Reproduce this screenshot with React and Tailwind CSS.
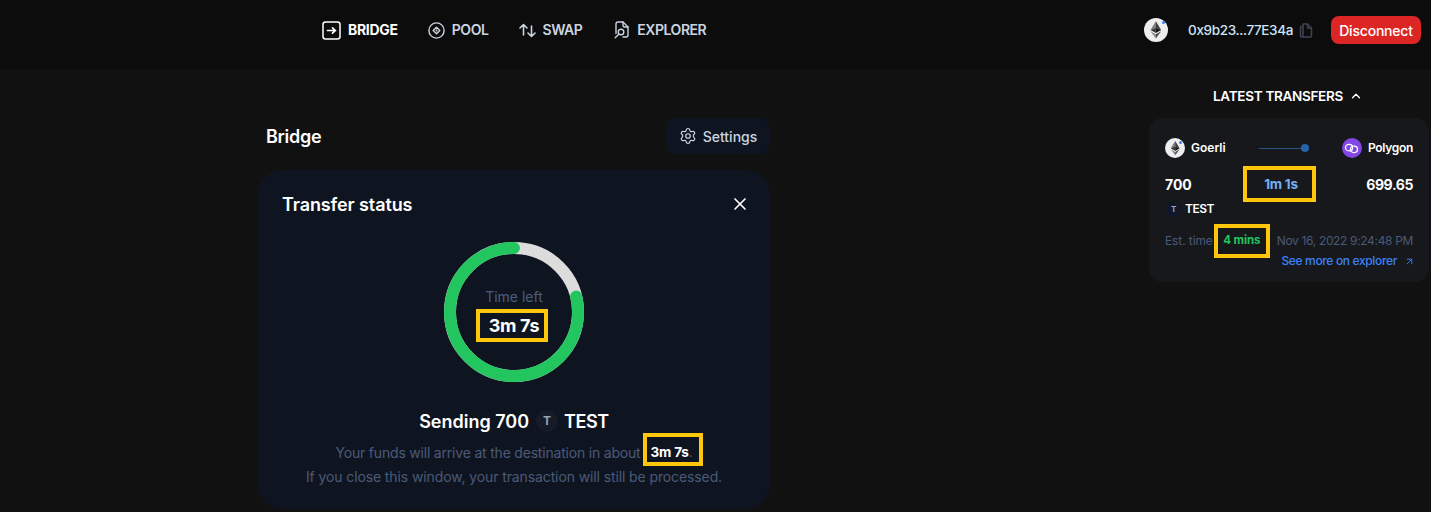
import React from "react";
import { X, ChevronUp, Settings, ArrowUpRight } from "lucide-react";

const Eth = ({ size = 24, dot = true }) => (
  <span className="relative inline-flex items-center justify-center rounded-full bg-[#eeeeee] shrink-0" style={{ width: size, height: size }}>
    <svg viewBox="0 0 24 24" width={size * 0.82} height={size * 0.82}>
      <path d="M12 1.5 5.5 12.2 12 9.4z" fill="#7a7a7a" />
      <path d="M12 1.5 18.5 12.2 12 9.4z" fill="#3f3f3f" />
      <path d="M5.5 12.2 12 16 12 9.4z" fill="#3a3a3a" />
      <path d="M18.5 12.2 12 16 12 9.4z" fill="#161616" />
      <path d="M5.5 13.6 12 22.5 12 17.4z" fill="#8a8a8a" />
      <path d="M18.5 13.6 12 22.5 12 17.4z" fill="#4a4a4a" />
    </svg>
    {dot && <span className="absolute right-[3px] top-[3px] h-[3px] w-[3px] rounded-full bg-[#3b82f6]" />}
  </span>
);

const NavItem = ({ icon, label, active, className }) => (
  <a className={`flex items-center text-[14px] leading-5 ${active ? "font-bold text-white" : "font-semibold text-[#cbd5e1]"} ${className || ""}`}>
    {icon}
    <span>{label}</span>
  </a>
);

const BridgeIcon = () => (
  <svg width="19" height="19" viewBox="0 0 19 19" fill="none" stroke="white" strokeWidth="1.5" strokeLinecap="round" strokeLinejoin="round">
    <rect x="1" y="1" width="17" height="17" rx="2.5" />
    <path d="M5.5 9.5h8M10.5 6.8l2.9 2.7-2.9 2.7" strokeWidth="1.7" />
  </svg>
);
const PoolIcon = () => (
  <svg width="17" height="17" viewBox="0 0 17 17" fill="none" stroke="#cbd5e1" strokeWidth="1.4">
    <circle cx="8.5" cy="8.5" r="7.6" />
    <path d="M8.5 5.2 11.8 8.5 8.5 11.8 5.2 8.5z" strokeLinejoin="round" />
    <circle cx="8.5" cy="8.5" r="0.9" fill="#cbd5e1" stroke="none" />
  </svg>
);
const SwapIcon = () => (
  <svg width="17" height="15" viewBox="0 0 17 15" fill="none" stroke="#cbd5e1" strokeWidth="1.6" strokeLinecap="round" strokeLinejoin="round">
    <path d="M4.5 12V1.5M1 5l3.5-3.5L8 5" />
    <path d="M12.5 3v10.5M9 10l3.5 3.5L16 10" />
  </svg>
);
const ExplorerIcon = () => (
  <svg width="15" height="18" viewBox="0 0 15 18" fill="none" stroke="#cbd5e1" strokeWidth="1.4" strokeLinecap="round" strokeLinejoin="round">
    <path d="M2 12.5V3a2 2 0 0 1 2-2h5l5 5v8a2 2 0 0 1-2 2H9" />
    <path d="M9 1v3.5a1.5 1.5 0 0 0 1.5 1.5H14" />
    <circle cx="7" cy="11" r="2.8" />
    <path d="M4.8 13.2 1.2 16.8" />
  </svg>
);
const FileCopy = () => (
  <svg width="14" height="15" viewBox="0 0 14 15" fill="none" stroke="#3b4454" strokeWidth="1.5" strokeLinejoin="round" className="ml-[6px]">
    <path d="M4 1h4.5L12.5 5v8a1 1 0 0 1-1 1H5a1 1 0 0 1-1-1z" />
    <path d="M8.5 1v4h4" />
    <path d="M4 3.5H2.5a1 1 0 0 0-1 1V13a1 1 0 0 0 1 1H5" />
  </svg>
);

const Polygon = () => (
  <span className="flex h-5 w-5 items-center justify-center rounded-full bg-[#8247e5] shrink-0">
    <svg width="15" height="15" viewBox="0 0 14 14" fill="none" stroke="white" strokeWidth="1.2">
      <rect x="1.4" y="3.2" width="6.6" height="6" rx="3" />
      <rect x="6" y="4.8" width="6.6" height="6" rx="3" />
    </svg>
  </span>
);

export default function App() {
  return (
    <div className="h-[512px] w-full overflow-hidden bg-[#111111] font-['Inter',sans-serif] text-white">
      <header className="flex h-[69px] items-center bg-[#0c0c0c] pb-[9px] pl-[322px] pr-[10px]">
        <nav className="flex items-center">
          <NavItem icon={<BridgeIcon />} label="BRIDGE" active className="gap-[7px] tracking-[-0.3px]" />
          <NavItem icon={<PoolIcon />} label="POOL" className="ml-[30px] gap-[7px] tracking-[-0.4px]" />
          <NavItem icon={<SwapIcon />} label="SWAP" className="ml-[30px] gap-[7px] tracking-[-0.5px]" />
          <NavItem icon={<ExplorerIcon />} label="EXPLORER" className="ml-[32px] gap-[8px] tracking-[-0.45px]" />
        </nav>
        <div className="ml-auto flex items-center">
          <Eth size={24} />
          <span className="ml-[20px] text-[13.5px] font-medium tracking-[-0.37px] text-[#cfe3f5]">0x9b23...77E34a</span>
          <FileCopy />
          <button className="ml-[18px] h-[28px] w-[90px] rounded-[8px] bg-[#dc2626] text-[14px] font-medium tracking-[-0.2px] text-white">Disconnect</button>
        </div>
      </header>

      <main className="flex items-start pl-[258px] pr-[2px]">
        <section className="w-[512px]">
          <div className="mt-[49px] flex h-[36px] items-center justify-between pl-[8px]">
            <h1 className="text-[18px] font-semibold tracking-[-0.3px] text-white">Bridge</h1>
            <button className="flex h-[36px] w-[104px] items-center justify-center gap-[6px] rounded-[10px] bg-[#0f1520] text-[14px] font-medium text-[#cbd5e1]">
              <Settings size={18} strokeWidth={1.6} />
              Settings
            </button>
          </div>
          <div className="mt-[16px] flex h-[339px] flex-col items-center rounded-[24px] bg-[#0f1520] px-[24px] pt-[21px]">
            <div className="flex w-full items-center justify-between">
              <h2 className="text-[18px] font-semibold leading-[27px] tracking-[-0.1px] text-white">Transfer status</h2>
              <X size={20} strokeWidth={2} className="mr-[-4px] mt-[-1px] text-white" />
            </div>
            <div className="relative mt-[24px] h-[140px] w-[140px]">
              <svg width="140" height="140" viewBox="0 0 140 140" fill="none" strokeWidth="12">
                <circle cx="70" cy="70" r="64" stroke="#dcdcdc" />
                <path d="M70 6A64 64 0 1 0 132.1 54.5" stroke="#22c55e" strokeLinecap="round" />
              </svg>
              <div className="absolute inset-0 flex flex-col items-center pt-[45px]">
                <span className="text-[14px] leading-5 text-[#4a5d7c]">Time left</span>
                <span className="ml-[-4px] mt-[2px] flex h-[33px] w-[72px] items-center justify-center border-[4px] border-[#ffc60b] pl-[4px] text-[18px] font-bold tracking-[-0.3px] text-white">3m 7s</span>
              </div>
            </div>
            <div className="mt-[26px] flex h-[26px] items-center text-[18px] font-semibold text-white">
              Sending 700
              <span className="ml-[7px] mr-[6px] flex h-[22px] w-[22px] items-center justify-center rounded-full bg-[#151b27] text-[12px] font-bold text-[#9aa3b2]">T</span>
              <span className="tracking-[-0.4px]">TEST</span>
            </div>
            <p className="ml-[11px] mt-[-1px] flex h-[33px] items-center whitespace-nowrap text-[14px] tracking-[-0.2px] text-[#4a5a78]">
              <span className="mt-[5px]">Your funds will arrive at the destination in about</span>
              <span className="ml-[3px] flex h-[33px] w-[60px] items-center justify-center border-[4px] border-[#ffc60b] pr-[4px] pt-[5px] text-[13.5px] font-bold tracking-[-0.2px] text-white">3m 7s<span className="font-normal text-[#4a5a78]">.</span></span>
            </p>
            <p className="mt-[1px] whitespace-nowrap text-[14px] leading-[20px] tracking-[-0.11px] text-[#4a5a78]">If you close this window, your transaction will still be processed.</p>
          </div>
        </section>

        <aside className="ml-auto w-[280px]">
          <div className="ml-[-2px] mt-[17px] flex h-[20px] items-center justify-center gap-[6px] text-[13.5px] font-semibold tracking-[-0.3px] text-white">
            LATEST TRANSFERS
            <ChevronUp size={14} strokeWidth={2.2} />
          </div>
          <div className="mt-[12px] h-[164px] rounded-[14px] bg-[#17181c] px-[16px] pt-[20px]">
            <div className="flex h-[20px] items-center justify-between">
              <div className="flex items-center gap-[6px] text-[12px] font-semibold text-white">
                <Eth size={20} />
                Goerli
              </div>
              <div className="flex items-center">
                <span className="h-px w-[42px] bg-[#2c5282]" />
                <span className="h-[8px] w-[8px] rounded-full bg-[#2563a8]" />
              </div>
              <div className="flex items-center gap-[6px] text-[12px] font-semibold tracking-[-0.3px] text-white">
                <Polygon />
                Polygon
              </div>
            </div>
            <div className="mt-[8px] flex items-center">
              <span className="w-[78px] text-[14px] font-bold text-white">700</span>
              <span className="flex h-[36px] w-[73px] items-center justify-center border-[4px] border-[#ffc60b] pl-[3px] text-[13.5px] font-bold tracking-[-0.2px] text-[#74b0f2]">1m 1s</span>
              <span className="ml-auto text-[14px] font-bold tracking-[-0.4px] text-white">699.65</span>
            </div>
            <div className="mt-[-1px] flex h-[16px] items-center gap-[4px] pl-[1px] text-[12px] font-semibold tracking-[-0.5px] text-white">
              <span className="flex h-[15px] w-[15px] items-center justify-center rounded-full bg-[#11172a] text-[8px] font-bold text-[#9aa3b2]">T</span>
              TEST
            </div>
            <div className="mt-[7px] flex items-center text-[12px] tracking-[-0.1px] text-[#4a5a78]">
              <span>Est. time</span>
              <span className="ml-[1px] flex h-[34px] w-[56px] items-center justify-center border-[4px] border-[#ffc60b] text-[11.5px] font-bold text-[#22c55e]">4 mins</span>
              <span className="ml-auto whitespace-nowrap tracking-[-0.34px]">Nov 16, 2022 9:24:48 PM</span>
            </div>
            <div className="mt-[-6px] flex items-center justify-end text-[12px] font-medium tracking-[-0.35px] text-[#3b82f6]">
              See more on explorer
              <ArrowUpRight size={11} strokeWidth={2} className="ml-[7px] mr-[-2px]" />
            </div>
          </div>
        </aside>
      </main>
    </div>
  );
}
